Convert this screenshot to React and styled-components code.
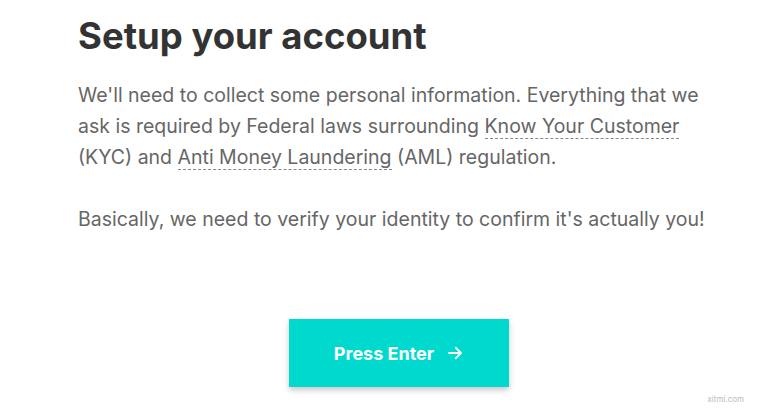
import React from "react";
import styled, { createGlobalStyle } from "styled-components";

const Global = createGlobalStyle`
  body {
    margin: 0;
    background: #fff;
    font-family: "Inter", "Liberation Sans", sans-serif;
  }
`;

const Page = styled.div`
  width: 768px;
  height: 410px;
  position: relative;
  overflow: hidden;
  display: flex;
  flex-direction: column;
  padding: 13px 0 0 78px;
  box-sizing: border-box;
`;

const Heading = styled.h1`
  margin: 0;
  font-size: 36.5px;
  font-weight: 700;
  color: #333;
  line-height: 46px;
`;

const Text = styled.p`
  margin: ${(p) => p.$top || 0}px 0 0;
  width: 650px;
  font-size: 19.5px;
  line-height: 31px;
  color: #666;
`;

const Term = styled.span`
  border-bottom: 1px dashed #888;
`;

const Actions = styled.div`
  display: flex;
  padding-left: 211px;
  margin-top: 84px;
`;

const Button = styled.button`
  width: 220px;
  height: 68px;
  border: none;
  background: #00d9cd;
  color: #fff;
  font-family: inherit;
  font-size: 18px;
  font-weight: 700;
  display: flex;
  align-items: center;
  justify-content: center;
  gap: 12px;
  box-shadow: 0 3px 6px rgba(0, 0, 0, 0.22);
`;

const Mark = styled.span`
  position: absolute;
  right: 24px;
  bottom: 6px;
  font-size: 8px;
  color: #bbb;
`;

export default function App() {
  return (
    <Page>
      <Global />
      <Heading>Setup your account</Heading>
      <Text $top={21}>
        We'll need to collect some personal information. Everything that we
        ask is required by Federal laws surrounding <Term>Know Your Customer</Term>{" "}
        (KYC) and <Term>Anti Money Laundering</Term> (AML) regulation.
      </Text>
      <Text $top={31}>
        Basically, we need to verify your identity to confirm it's actually you!
      </Text>
      <Actions>
        <Button>
          Press Enter
          <svg width="18" height="18" viewBox="0 0 24 24" fill="none" stroke="#fff" strokeWidth="2.4" strokeLinecap="round" strokeLinejoin="round">
            <path d="M4 12h16M13 5l7 7-7 7" />
          </svg>
        </Button>
      </Actions>
      <Mark>xitmi.com</Mark>
    </Page>
  );
}
